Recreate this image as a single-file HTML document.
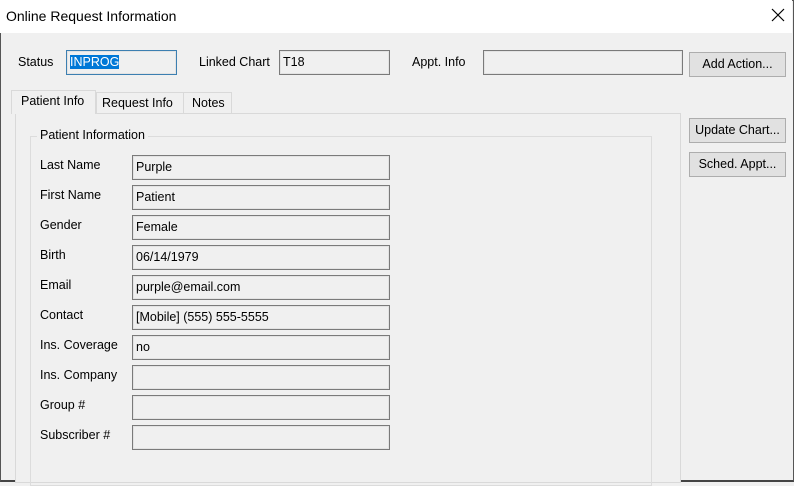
<!DOCTYPE html>
<html><head><style>
*{margin:0;padding:0;box-sizing:border-box}
body{width:794px;height:482px;background:#f0f0f0;font-family:"Liberation Sans",Arial,sans-serif;font-size:12.5px;color:#000;position:relative;overflow:hidden}
.win{position:absolute;left:0;top:0;width:794px;height:482px;border:1px solid #555;border-bottom:2px solid #444}
.title{position:absolute;left:0;top:0;width:792px;height:33px;background:#fff}
.a{position:absolute;white-space:nowrap}
.box{position:absolute;background:#f0f0f0;border:1px solid #7a7a7a;box-shadow:inset 0 0 0 1px #e3e3e3;padding:4px 3px;height:25px;line-height:15px}
.btn{position:absolute;background:#e1e1e1;border:1px solid #adadad;text-align:center;line-height:22px;height:25px;width:97px}
</style></head><body>
<div class="win"></div>
<div class="title"></div>
<div class="a" style="left:6px;top:8px;font-size:14px">Online Request Information</div>
<svg class="a" style="left:771px;top:8px" width="14" height="14"><path d="M1 1L13 13M13 1L1 13" stroke="#000" stroke-width="1.2"/></svg>

<div class="a" style="left:18px;top:55px">Status</div>
<div class="box" style="left:66px;top:50px;width:111px;border-color:#3c7fb1;background:#f0f0f0"><span style="background:#0078d7;color:#fff">INPROG</span></div>
<div class="a" style="left:199px;top:55px">Linked Chart</div>
<div class="box" style="left:279px;top:50px;width:111px">T18</div>
<div class="a" style="left:412px;top:55px">Appt. Info</div>
<div class="box" style="left:483px;top:50px;width:200px"></div>
<div class="btn" style="left:689px;top:52px">Add Action...</div>

<div class="a" style="left:15px;top:113px;width:666px;height:370px;border:1px solid #d9d9d9;background:#f0f0f0"></div>
<div class="a" style="left:11px;top:90px;width:85px;height:24px;border:1px solid #d9d9d9;border-bottom:none;background:#f0f0f0;padding:3px 0 0 9px">Patient Info</div>
<div class="a" style="left:96px;top:92px;width:88px;height:21px;border:1px solid #d9d9d9;border-bottom:none;background:#f0f0f0;padding:3px 0 0 5px">Request Info</div>
<div class="a" style="left:183px;top:92px;width:49px;height:21px;border:1px solid #d9d9d9;border-bottom:none;background:#f0f0f0;padding:3px 0 0 8px">Notes</div>

<div class="a" style="left:30px;top:136px;width:622px;height:350px;border:1px solid #dcdcdc"></div>
<div class="a" style="left:37px;top:128px;background:#f0f0f0;padding:0 3px">Patient Information</div>

<div class="a" style="left:40px;top:158px">Last Name</div><div class="box" style="left:132px;top:155px;width:258px">Purple</div>
<div class="a" style="left:40px;top:188px">First Name</div><div class="box" style="left:132px;top:185px;width:258px">Patient</div>
<div class="a" style="left:40px;top:218px">Gender</div><div class="box" style="left:132px;top:215px;width:258px">Female</div>
<div class="a" style="left:40px;top:248px">Birth</div><div class="box" style="left:132px;top:245px;width:258px">06/14/1979</div>
<div class="a" style="left:40px;top:278px">Email</div><div class="box" style="left:132px;top:275px;width:258px">purple@email.com</div>
<div class="a" style="left:40px;top:308px">Contact</div><div class="box" style="left:132px;top:305px;width:258px">[Mobile] (555) 555-5555</div>
<div class="a" style="left:40px;top:338px">Ins. Coverage</div><div class="box" style="left:132px;top:335px;width:258px">no</div>
<div class="a" style="left:40px;top:368px">Ins. Company</div><div class="box" style="left:132px;top:365px;width:258px"></div>
<div class="a" style="left:40px;top:398px">Group #</div><div class="box" style="left:132px;top:395px;width:258px"></div>
<div class="a" style="left:40px;top:428px">Subscriber #</div><div class="box" style="left:132px;top:425px;width:258px"></div>

<div class="btn" style="left:689px;top:118px">Update Chart...</div>
<div class="btn" style="left:689px;top:152px">Sched. Appt...</div>
</body></html>
